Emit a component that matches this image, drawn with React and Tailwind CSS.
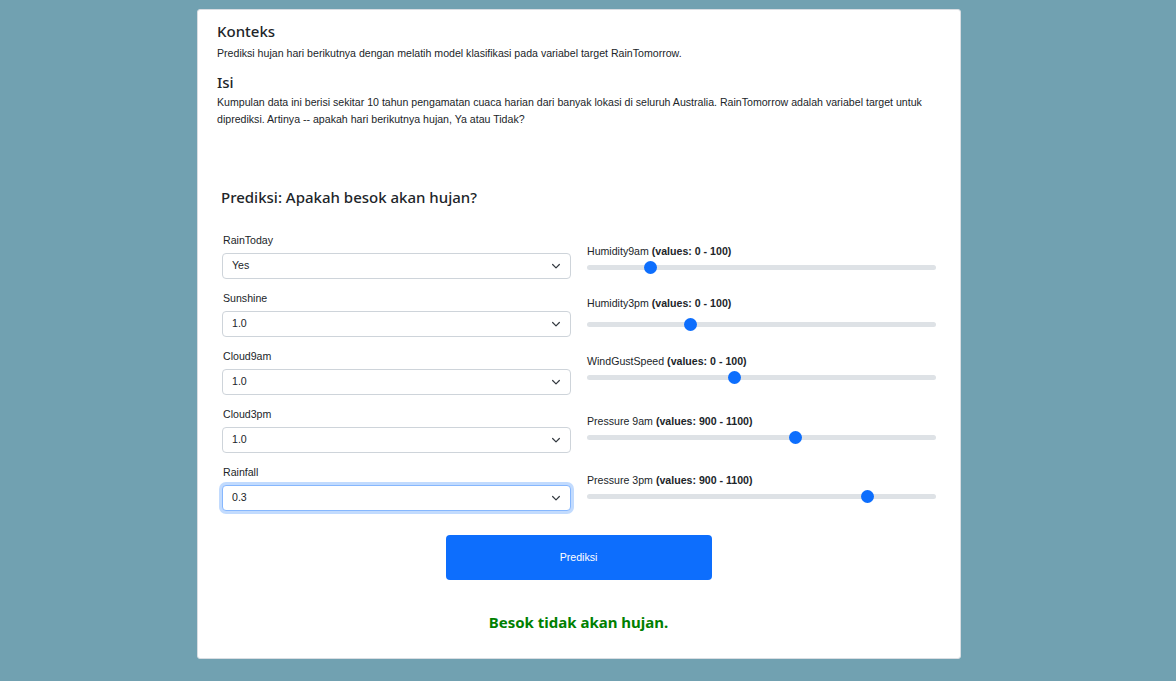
import React, { useState } from 'react';

const selects = [
    { label: 'RainToday', value: 'Yes', options: ['Yes', 'No'] },
    { label: 'Sunshine', value: '1.0', options: ['0.0', '1.0', '2.0', '3.0'] },
    { label: 'Cloud9am', value: '1.0', options: ['0.0', '1.0', '2.0', '3.0'] },
    { label: 'Cloud3pm', value: '1.0', options: ['0.0', '1.0', '2.0', '3.0'] },
    { label: 'Rainfall', value: '0.3', options: ['0.0', '0.3', '1.0'], focused: true },
];

const sliders = [
    { label: 'Humidity9am', min: 0, max: 100, value: 17, top: 'mt-0', gap: 'mt-0' },
    { label: 'Humidity3pm', min: 0, max: 100, value: 29, top: 'mt-[20px]', gap: 'mt-[5px]' },
    { label: 'WindGustSpeed', min: 0, max: 100, value: 42, top: 'mt-[21px]', gap: 'mt-0' },
    { label: 'Pressure 9am', min: 900, max: 1100, value: 1020, top: 'mt-[28px]', gap: 'mt-0' },
    { label: 'Pressure 3pm', min: 900, max: 1100, value: 1063, top: 'mt-[27px]', gap: 'mt-0' },
];

function Chevron() {
    return (
        <svg width="12" height="12" viewBox="0 0 16 16" fill="none" stroke="#343a40" strokeWidth="1.6" strokeLinecap="round" strokeLinejoin="round">
            <path d="M3.5 6l4.5 4.5L12.5 6" />
        </svg>
    );
}

function SelectField({ item }) {
    const [value, setValue] = useState(item.value);
    return (
        <div className="mb-[11px]">
            <label className="block h-4 leading-4 mb-[5px] pl-[1px] text-[10.6px] text-[#212529]">{item.label}</label>
            <div className="relative">
                <select
                    value={value}
                    onChange={(e) => setValue(e.target.value)}
                    className={
                        item.focused
                            ? 'block w-full h-[26px] appearance-none rounded-[4px] border border-[#86b7fe] bg-white pl-[9px] text-[10.6px] text-[#212529] outline-none shadow-[0_0_0_3px_rgba(13,110,253,0.25)]'
                            : 'block w-full h-[26px] appearance-none rounded-[4px] border border-[#ced4da] bg-white pl-[9px] text-[10.6px] text-[#212529] outline-none'
                    }
                >
                    {item.options.map((o) => (
                        <option key={o} value={o}>{o}</option>
                    ))}
                </select>
                <span className="pointer-events-none absolute right-[9px] top-[7px]">
                    <Chevron />
                </span>
            </div>
        </div>
    );
}

function SliderField({ item }) {
    const pct = ((item.value - item.min) / (item.max - item.min)) * 100;
    return (
        <div className={item.top}>
            <div className="h-4 leading-4 text-[10.6px] text-[#212529]">
                {item.label} <span className="font-bold">(values: {item.min} - {item.max})</span>
            </div>
            <div className={`relative h-4 ${item.gap}`}>
                <div className="absolute left-0 right-0 top-[6px] h-[5px] rounded-full bg-[#dee2e6]" />
                <div className="absolute inset-x-[6px] top-0 h-4">
                    <div
                        className="absolute top-[1.5px] h-[13px] w-[13px] -ml-[6.5px] rounded-full bg-[#0d6efd]"
                        style={{ left: pct + '%' }}
                    />
                </div>
            </div>
        </div>
    );
}

export default function App() {
    return (
        <div className="min-h-[681px] bg-[#71a1b1] pt-[9px] pb-[22px] font-['Liberation_Sans',sans-serif] text-[#212529]">
            <div className="ml-[197px] w-[764px] rounded-[3px] border border-[#d8dde2] bg-white pl-[19px] pr-[18px] pt-[11px] pb-[24px]">
                <h2 className="font-['Noto_Sans',sans-serif] text-[15px] leading-5 font-medium">Konteks</h2>
                <p className="mt-[4px] text-[10.6px] leading-[17px]">
                    Prediksi hujan hari berikutnya dengan melatih model klasifikasi pada variabel target RainTomorrow.
                </p>
                <h2 className="mt-[10px] font-['Noto_Sans',sans-serif] text-[15px] leading-5 font-medium">Isi</h2>
                <p className="mt-[2px] text-[10.6px] leading-[17px]">
                    Kumpulan data ini berisi sekitar 10 tahun pengamatan cuaca harian dari banyak lokasi di seluruh Australia. RainTomorrow adalah variabel target untuk diprediksi. Artinya -- apakah hari berikutnya hujan, Ya atau Tidak?
                </p>

                <div className="mt-[57px] pl-[4px] pr-[6px]">
                    <h3 className="font-['Noto_Sans',sans-serif] text-[15px] leading-6 font-medium">Prediksi: Apakah besok akan hujan?</h3>

                    <div className="mt-[23px] grid grid-cols-2 gap-x-[16px] pl-[1px]">
                        <div>
                            {selects.map((s) => (
                                <SelectField key={s.label} item={s} />
                            ))}
                        </div>
                        <div className="pt-[11px]">
                            {sliders.map((s) => (
                                <SliderField key={s.label} item={s} />
                            ))}
                        </div>
                    </div>

                    <div className="mt-[13px] flex justify-center">
                        <button
                            type="button"
                            className="h-[45px] w-[266px] rounded-[4px] bg-[#0d6efd] text-[10.6px] text-white"
                        >
                            Prediksi
                        </button>
                    </div>

                    <p className="mt-[30px] text-center font-['Noto_Sans',sans-serif] text-[15px] leading-6 font-bold text-[#008000]">
                        Besok tidak akan hujan.
                    </p>
                </div>
            </div>
        </div>
    );
}
